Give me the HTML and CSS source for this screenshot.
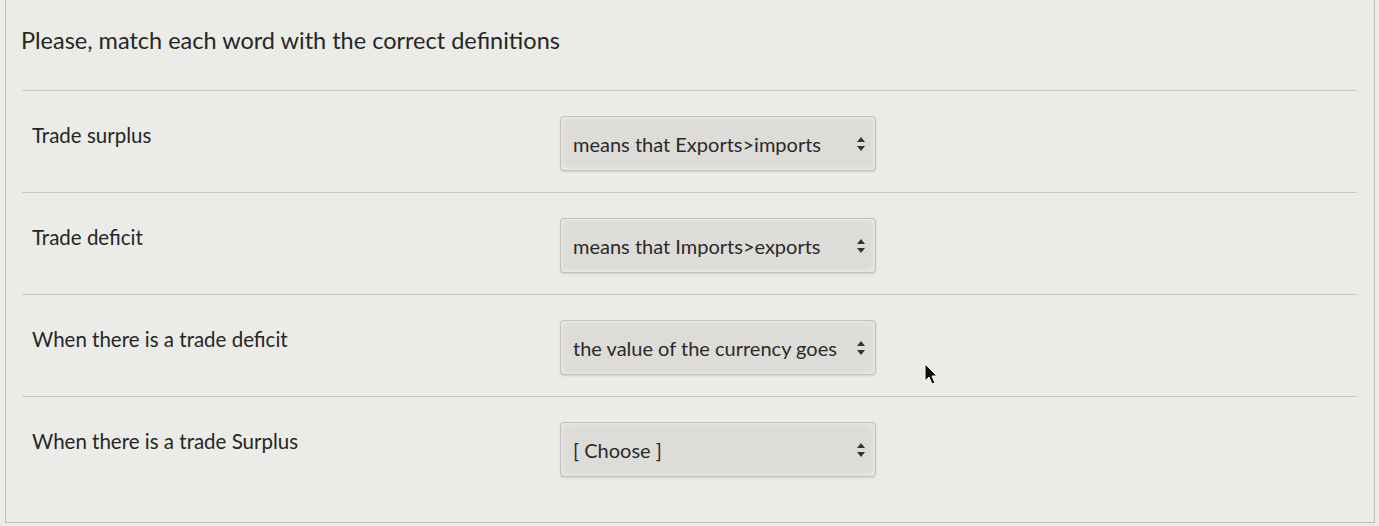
FILE: index.html
```html
<!DOCTYPE html>
<html>
<head>
  <title>Matching question</title>
<link rel="stylesheet" href="styles.css">
</head>
<body>
  <div class="panel">
    <div class="title">Please, match each word with the correct definitions</div>
    <div class="question">
      <div class="row">
        <div class="label">Trade surplus</div>
        <div class="select">
          <span class="value">means that Exports&gt;imports</span>
          <svg class="arrows" width="8" height="14" viewBox="0 0 8 14"><path d="M4 0 L8 5 L0 5 Z M0 9 L8 9 L4 14 Z" fill="#333"/></svg>
        </div>
      </div>
      <div class="row">
        <div class="label">Trade deficit</div>
        <div class="select">
          <span class="value">means that Imports&gt;exports</span>
          <svg class="arrows" width="8" height="14" viewBox="0 0 8 14"><path d="M4 0 L8 5 L0 5 Z M0 9 L8 9 L4 14 Z" fill="#333"/></svg>
        </div>
      </div>
      <div class="row">
        <div class="label">When there is a trade deficit</div>
        <div class="select">
          <span class="value">the value of the currency goes</span>
          <svg class="arrows" width="8" height="14" viewBox="0 0 8 14"><path d="M4 0 L8 5 L0 5 Z M0 9 L8 9 L4 14 Z" fill="#333"/></svg>
        </div>
        <svg class="cursor" width="16" height="24" viewBox="0 0 16 24"><path d="M1 1 L1 18 L5 14 L8 21 L11 20 L8 13 L13 13 Z" fill="#111" stroke="#fff" stroke-width="1"/></svg>
      </div>
      <div class="row">
        <div class="label">When there is a trade Surplus</div>
        <div class="select">
          <span class="value">[ Choose ]</span>
          <svg class="arrows" width="8" height="14" viewBox="0 0 8 14"><path d="M4 0 L8 5 L0 5 Z M0 9 L8 9 L4 14 Z" fill="#333"/></svg>
        </div>
      </div>
    </div>
  </div>
</body>
</html>
```
FILE: styles.css
```css
body {
    margin: 0;
    background-color: #ebebe7;
    font-family: Lato, 'Open Sans', sans-serif;
    color: #2a2a2a;
  }

  .panel {
    margin-left: 5px;
    width: 1370px;
    height: 523px;
    box-sizing: border-box;
    border: 1px solid #bdbdb9;
    border-top: none;
  }

  .title {
    height: 64px;
    padding: 26px 0 0 15px;
    font-size: 23.5px;
    line-height: 28px;
    color: #262626;
  }

  .question {
    margin: 0 17px 0 16px;
  }

  .row {
    position: relative;
    display: flex;
    align-items: flex-start;
    height: 76px;
    padding-top: 25px;
    border-top: 1px solid #c9c9c5;
  }

  .label {
    width: 538px;
    padding: 6px 0 0 10px;
    box-sizing: border-box;
    font-size: 20.5px;
    line-height: 26px;
    color: #262626;
  }

  .select {
    display: flex;
    align-items: center;
    justify-content: space-between;
    width: 316px;
    height: 55px;
    box-sizing: border-box;
    padding: 0 10px 0 12px;
    background-color: #dddcd8;
    border: 1px solid #c2c2be;
    border-radius: 4px;
    box-shadow: inset 0 0 6px rgba(255, 255, 255, 0.6), 0 1px 2px rgba(0, 0, 0, 0.12);
    font-size: 20px;
    color: #2a2a2a;
  }

  .value {
    white-space: nowrap;
    overflow: hidden;
  }

  .arrows {
    flex-shrink: 0;
  }

  .cursor {
    position: absolute;
    left: 902px;
    top: 68px;
  }
```
